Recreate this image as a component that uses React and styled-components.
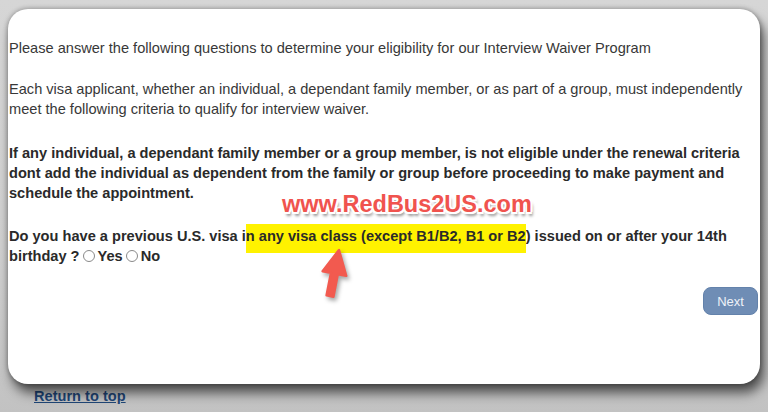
import React from "react";
import styled, { createGlobalStyle } from "styled-components";

const GlobalStyle = createGlobalStyle`
  html, body {
    margin: 0;
    padding: 0;
  }
  body {
    background: linear-gradient(180deg, #d6d6d6 0%, #cfcfcf 60%, #c2c2c2 100%);
    font-family: "Liberation Sans", Arial, Helvetica, sans-serif;
    overflow: hidden;
  }
`;

const Page = styled.div`
  width: 768px;
  height: 412px;
  box-sizing: border-box;
  padding: 9px 8px 0 8px;
`;

const Card = styled.div`
  position: relative;
  height: 375px;
  box-sizing: border-box;
  padding: 29px 2px 0 1px;
  background: #fff;
  border-radius: 20px;
  box-shadow: 0 0 4px 1px rgba(0, 0, 0, 0.25), 4px 9px 12px rgba(0, 0, 0, 0.6);
`;

const Para = styled.p`
  margin: 0 0 ${(p) => p.gap || 21}px;
  font-size: 14.6px;
  line-height: 20px;
  color: ${(p) => (p.bold ? "#2a2a2a" : "#383838")};
  font-weight: ${(p) => (p.bold ? 700 : 400)};
  white-space: nowrap;
`;

const Highlight = styled.span`
  background: #fff200;
  padding: 4px 0 9px;
`;

const Radio = styled.span`
  display: inline-block;
  width: 10px;
  height: 10px;
  border: 1px solid #8a8a8a;
  border-radius: 50%;
  background: #fff;
  margin: 0 3px 0 3px;
  vertical-align: -1px;
`;

const ButtonRow = styled.div`
  display: flex;
  justify-content: flex-end;
  margin-top: 21px;
`;

const NextButton = styled.button`
  width: 55px;
  height: 28px;
  border: 1px solid #6382ab;
  border-radius: 8px;
  background: #6f8db5;
  color: #eef2f8;
  font-family: "Liberation Sans", Arial, sans-serif;
  font-size: 13px;
  padding: 0;
`;

const Watermark = styled.div`
  position: absolute;
  left: 274px;
  top: 184px;
  font-size: 23.5px;
  line-height: 1;
  font-weight: 700;
  color: #f0534e;
  white-space: nowrap;
  text-shadow: -1.5px -1.5px 0 #fff, 1.5px -1.5px 0 #fff, -1.5px 1.5px 0 #fff,
    1.5px 1.5px 0 #fff, 0 2px 0 #fff, 2px 0 0 #fff, 2px 4px 3px rgba(0, 0, 0, 0.45);
`;

const Arrow = styled.svg`
  position: absolute;
  left: 302px;
  top: 236px;
  overflow: visible;
  filter: drop-shadow(2px 3px 2px rgba(0, 0, 0, 0.35));
`;

const TopLink = styled.a`
  display: inline-block;
  margin: 2px 0 0 26px;
  font-size: 14.6px;
  line-height: 20px;
  font-weight: 700;
  color: #1f4677;
  text-decoration: underline;
`;

export default function App() {
  return (
    <>
      <GlobalStyle />
      <Page>
        <Card>
          <Para>
            Please answer the following questions to determine your eligibility for our Interview
            Waiver Program
          </Para>
          <Para gap={24}>
            Each visa applicant, whether an individual, a dependant family member, or as part of a
            group, must independently
            <br />
            meet the following criteria to qualify for interview waiver.
          </Para>
          <Para bold gap={23}>
            If any individual, a dependant family member or a group member, is not eligible under
            the renewal criteria
            <br />
            dont add the individual as dependent from the family or group before proceeding to make
            payment and
            <br />
            schedule the appointment.
          </Para>
          <Para bold gap={0}>
            Do you have a previous U.S. visa i
            <Highlight>n any visa class (except B1/B2, B1 or B2</Highlight>) issued on or after
            your 14th
            <br />
            birthday ?<Radio />Yes<Radio />No
          </Para>
          <ButtonRow>
            <NextButton>Next</NextButton>
          </ButtonRow>
          <Watermark>www.RedBus2US.com</Watermark>
          <Arrow width="50" height="62" viewBox="0 0 50 62">
            <path
              d="M29 5 L36.2 30.8 L27.8 29.2 L23.4 51.7 L16.6 50.3 L21 27.8 L12.6 26.2 Z"
              fill="#f25a4f"
              stroke="#f25a4f"
              strokeWidth="2.5"
              strokeLinejoin="round"
            />
          </Arrow>
        </Card>
        <TopLink href="#top">Return to top</TopLink>
      </Page>
    </>
  );
}
